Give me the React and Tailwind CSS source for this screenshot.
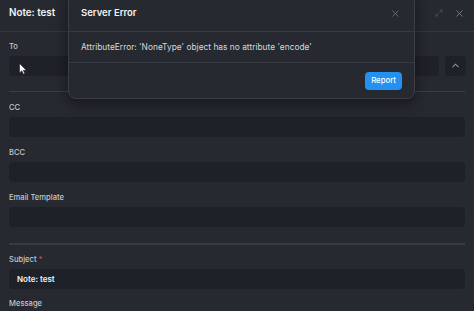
import { X, ChevronUp, Maximize2 } from "lucide-react";

function Field({ label, required, value, children }) {
  return (
    <div className="flex flex-col">
      <label className="h-[9px] flex items-center text-[7.6px] font-medium text-[#c4c8cf] leading-none mb-[4.5px]">
        {label}
        {required && <span className="text-[#d24a55] ml-[2px]">*</span>}
      </label>
      <div className="flex items-center gap-[6px]">
        <div className="h-[20px] flex-1 rounded-[4px] bg-[#1e2127] flex items-center px-[8px] text-[8px] font-semibold text-[#f2f3f5]">
          {value}
        </div>
        {children}
      </div>
    </div>
  );
}

export default function App() {
  return (
    <div
      className="relative w-[474px] h-[311px] overflow-hidden bg-[#262930] text-[#e8e9eb]"
      style={{ fontFamily: "Inter, 'Noto Sans', sans-serif" }}
    >
      {/* Page header */}
      <div className="h-[32px] pb-[5px] flex items-center justify-between pl-[9px] pr-[9px] border-b border-[#34373f]">
        <span className="text-[9.8px] font-semibold text-[#f3f4f6]">Note: test</span>
        <div className="flex items-center gap-[11px] text-[#4f535b]">
          <Maximize2 size={8} strokeWidth={2.2} />
          <X size={11} strokeWidth={1.8} className="text-[#80848c]" />
        </div>
      </div>

      {/* Form */}
      <div className="px-[9px] pt-[10px] flex flex-col">
        <Field label="To">
          <button className="h-[20px] w-[21px] rounded-[4px] bg-[#1e2127] flex items-center justify-center text-[#d0d3d8] mr-[-1px]">
            <ChevronUp size={11} strokeWidth={2} />
          </button>
        </Field>
        <div className="mt-[15px] border-t border-[#3a3d45]" />
        <div className="mt-[12px] flex flex-col gap-[11.5px]">
          <Field label="CC" />
          <Field label="BCC" />
          <Field label="Email Template" />
        </div>
        <div className="mt-[16px] h-[2px] bg-[#383b43]" />
        <div className="mt-[10.5px] flex flex-col">
          <Field label="Subject" required value="Note: test" />
        </div>
        <div className="mt-[10.5px] h-[9px] flex items-center text-[7.6px] font-medium text-[#c4c8cf] leading-none">
          Message
        </div>
      </div>

      {/* Error modal */}
      <div className="absolute left-[68px] top-[-9px] w-[347px] rounded-[8px] border border-[#3b3e46] bg-[#262930] shadow-[0_4px_14px_rgba(0,0,0,0.45)]">
        <div className="h-[40px] pt-[4px] flex items-center justify-between pl-[12px] pr-[13px] border-b border-[#383b43]">
          <span className="text-[9.5px] font-semibold text-[#f3f4f6]">Server Error</span>
          <X size={11} strokeWidth={1.6} className="text-[#7a7e86]" />
        </div>
        <div className="h-[31px] flex items-center pl-[12px] border-b border-[#383b43] text-[8.4px] text-[#d5d8dd]">
          AttributeError: 'NoneType' object has no attribute 'encode'
        </div>
        <div className="h-[35px] flex items-center justify-end pr-[12px]">
          <button className="h-[18px] px-[6px] rounded-[4px] bg-[#2490ef] text-[7.8px] font-medium text-white">
            Report
          </button>
        </div>
      </div>

      {/* Cursor */}
      <svg className="absolute left-[19px] top-[63px]" width="8" height="12" viewBox="0 0 8 12">
        <path d="M0.5 0.5 L0.5 10 L2.8 7.8 L4.4 11.2 L5.8 10.6 L4.3 7.3 L7.3 7.3 Z" fill="#fff" stroke="#222" strokeWidth="0.6" />
      </svg>
    </div>
  );
}
